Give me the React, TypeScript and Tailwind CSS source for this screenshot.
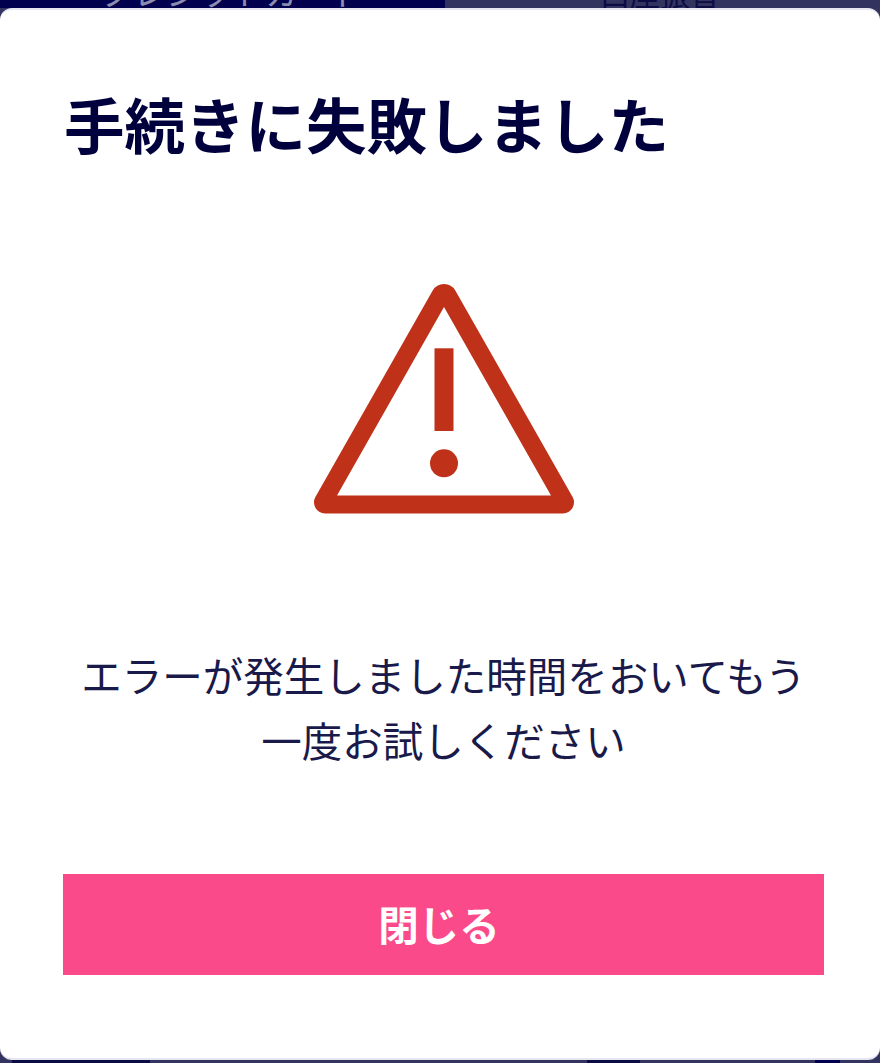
import React from 'react';

const jp = { fontFamily: '"Noto Sans CJK JP", sans-serif' };

function WarningIcon() {
  return (
    <svg width="268" height="240" viewBox="0 0 268 240" className="block overflow-visible">
      <path
        fillRule="evenodd"
        fill="#bf3118"
        d="M145.3 10.5 L262.6 217.1 A11 11 0 0 1 253 233.5 H15 A11 11 0 0 1 5.4 217.1 L122.7 10.5 A13 13 0 0 1 145.3 10.5 Z M134 27 L27 215.5 H241 Z"
      />
      <rect x="124.5" y="68.3" width="19" height="82.7" fill="#bf3118" />
      <circle cx="134" cy="183.3" r="14" fill="#bf3118" />
    </svg>
  );
}

export default function App() {
  return (
    <div className="w-[880px] h-[1063px] overflow-hidden bg-[#33335f]" style={jp}>
      <div className="flex h-2 w-full overflow-hidden">
        <div className="flex w-[445px] h-2 items-end pl-[100px] bg-[#00004f]">
          <span className="text-[33px] leading-[33px] text-[#8d8db0] whitespace-nowrap">
            クレジットカード
          </span>
        </div>
        <div className="flex flex-1 h-2 items-end pl-[155px] bg-[#33335f]">
          <span className="text-[30px] leading-[30px] text-[#0c0c45] whitespace-nowrap">
            口座振替
          </span>
        </div>
      </div>
      <div className="flex flex-col h-[1052px] bg-white rounded-[12px] border-y-2 border-[#e6e6f0]">
        <h1 className="mt-[79px] ml-[64px] text-[60.5px] leading-[68px] font-bold text-[#00003c] whitespace-nowrap">
          手続きに失敗しました
        </h1>
        <div className="flex pl-[310px] mt-[123px]">
          <WarningIcon />
        </div>
        <p className="mt-[122px] pl-[63px] pr-[56px] text-center text-[40.5px] leading-[65px] text-[#1a1a4a] whitespace-nowrap">
          エラーが発生しました時間をおいてもう
          <br />
          一度お試しください
        </p>
        <div className="mt-[102px] pl-[63px] pr-[56px]">
          <button className="w-full h-[101px] pr-[9px] bg-[#fb4a8a] text-white text-[40.5px] font-bold">
            閉じる
          </button>
        </div>
      </div>
      <div className="flex h-[3px]">
        <div className="ml-[12px] w-[138px] bg-[#0c0c45]" />
        <div className="ml-[437px] w-[53px] bg-[#0c0c45]" />
        <div className="ml-[175px] w-[25px] bg-[#00004f]" />
      </div>
    </div>
  );
}
